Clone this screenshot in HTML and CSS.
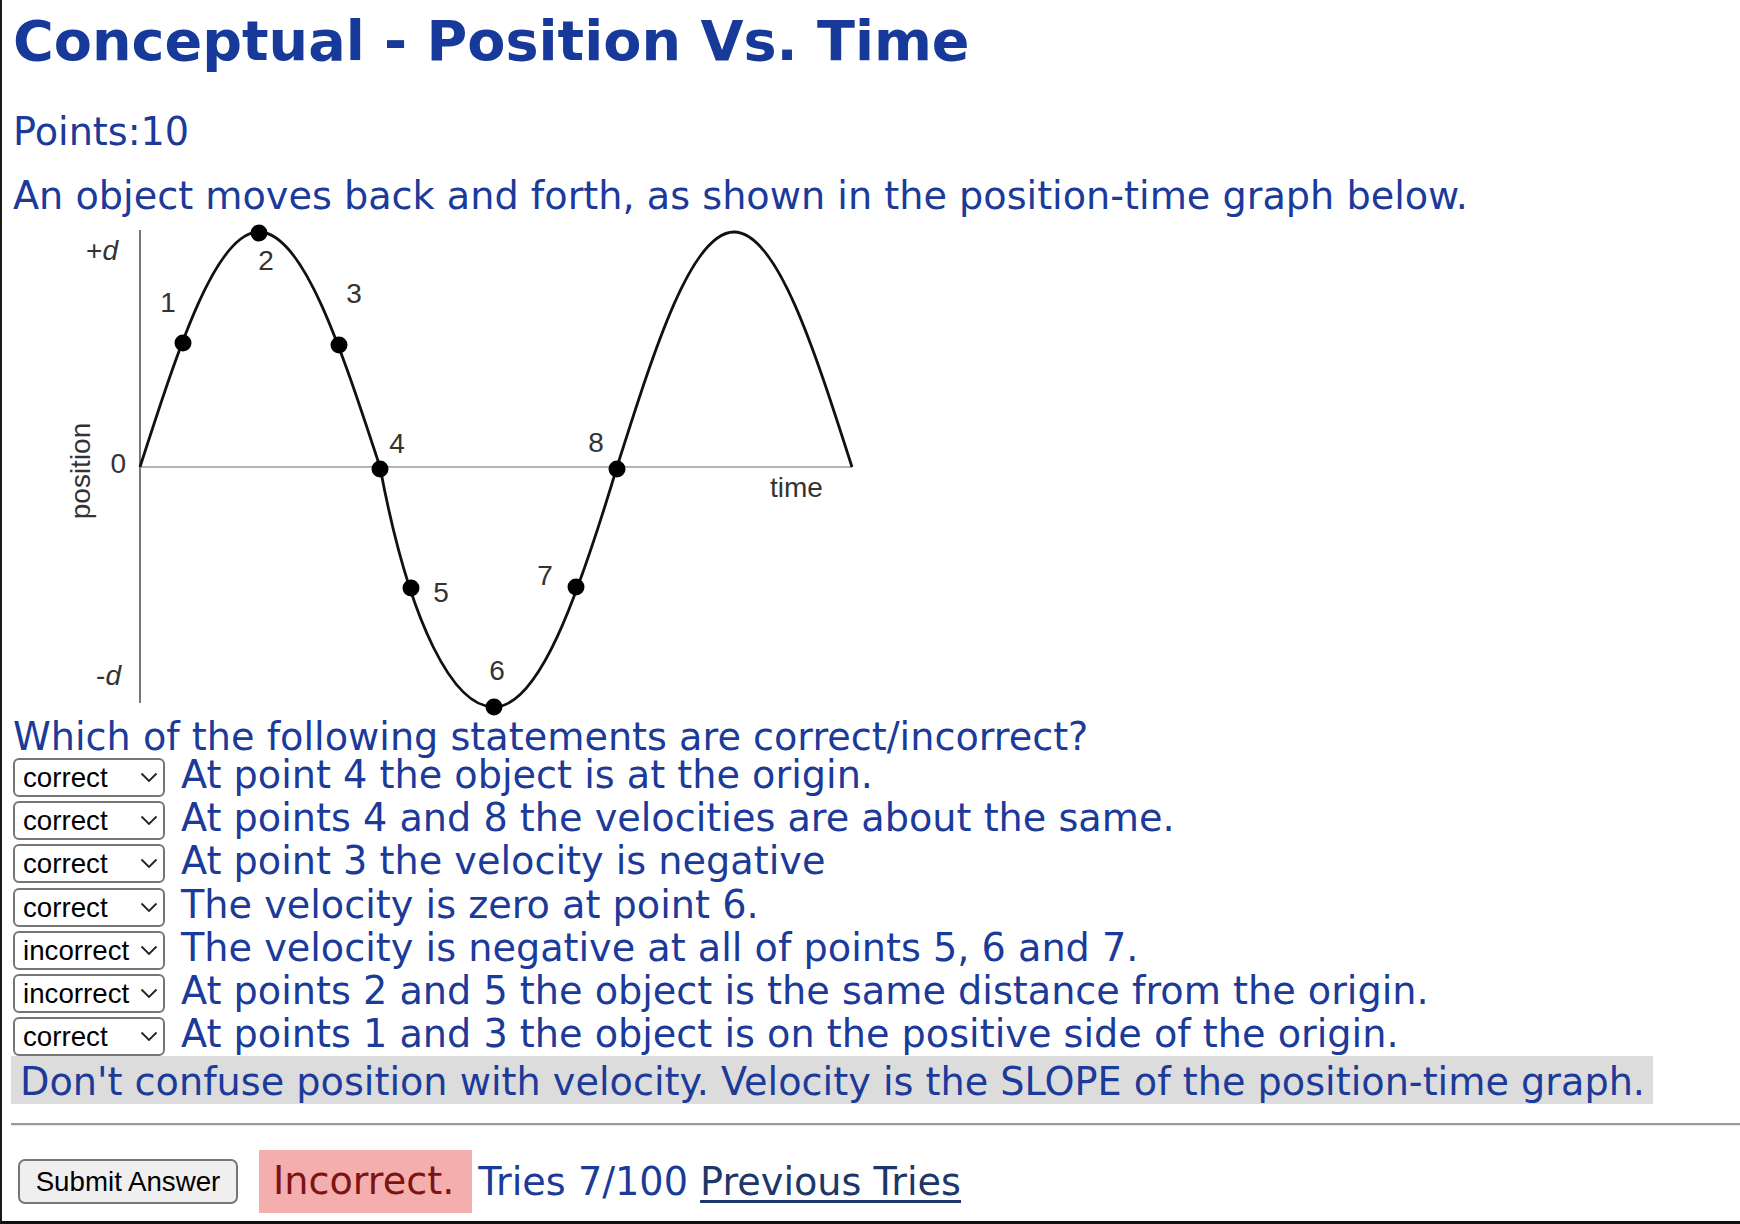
FILE: index.html
```html
<!DOCTYPE html>
<html lang="en">
<head>
    <meta charset="UTF-8">
    <title>Conceptual - Position Vs. Time</title>
    <link rel="stylesheet" href="styles.css">
</head>
<body>
<div class="page">

    <h1 class="title">Conceptual - Position Vs. Time</h1>

    <p class="points">Points:10</p>

    <p class="intro">An object moves back and forth, as shown in the position-time graph below.</p>

    <svg class="graph" width="860" height="496" viewBox="13 220 860 496">
        <line x1="140" y1="230" x2="140" y2="703" stroke="#555" stroke-width="1.6"/>
        <line x1="140" y1="467" x2="852" y2="467" stroke="#b4b4b4" stroke-width="2"/>
        <path d="M140 467 C178.8 346.7 215.9 232 259 232 C302.8 232 340.6 346.7 380 467 C410 627 454 707 494 707 C538.5 707 577 600 617 467 C655.1 346.7 691.6 232 734 232 C776.7 232 813.5 346.7 852 467"
              fill="none" stroke="#111" stroke-width="2.8"/>
        <g fill="#000">
            <circle cx="183" cy="343" r="8.5"/>
            <circle cx="259" cy="233" r="8.5"/>
            <circle cx="339" cy="345" r="8.5"/>
            <circle cx="380" cy="469" r="8.5"/>
            <circle cx="411" cy="588" r="8.5"/>
            <circle cx="494" cy="707" r="8.5"/>
            <circle cx="576" cy="587" r="8.5"/>
            <circle cx="617" cy="469" r="8.5"/>
        </g>
        <g class="graph-num" text-anchor="middle">
            <text x="168" y="312">1</text>
            <text x="266" y="270">2</text>
            <text x="354" y="303">3</text>
            <text x="397" y="453">4</text>
            <text x="441" y="602">5</text>
            <text x="497" y="680">6</text>
            <text x="545" y="585">7</text>
            <text x="596" y="452">8</text>
        </g>
        <g class="graph-num" text-anchor="end">
            <text x="118" y="260">+<tspan font-style="italic">d</tspan></text>
            <text x="126" y="473">0</text>
            <text x="121" y="685">-<tspan font-style="italic">d</tspan></text>
        </g>
        <text class="graph-num" x="770" y="497">time</text>
        <text class="graph-num" x="90" y="471" text-anchor="middle" transform="rotate(-90 90 471)">position</text>
    </svg>

    <p class="question">Which of the following statements are correct/incorrect?</p>

    <div class="statements">
        <div class="statement">
            <span class="pick"><select><option selected>correct</option><option>incorrect</option></select><svg class="chev" width="18" height="11" viewBox="0 0 18 11"><path d="M1.5 1.5 L9 9 L16.5 1.5"/></svg></span>
            <span class="statement-text">At point 4 the object is at the origin.</span>
        </div>
        <div class="statement">
            <span class="pick"><select><option selected>correct</option><option>incorrect</option></select><svg class="chev" width="18" height="11" viewBox="0 0 18 11"><path d="M1.5 1.5 L9 9 L16.5 1.5"/></svg></span>
            <span class="statement-text">At points 4 and 8 the velocities are about the same.</span>
        </div>
        <div class="statement">
            <span class="pick"><select><option selected>correct</option><option>incorrect</option></select><svg class="chev" width="18" height="11" viewBox="0 0 18 11"><path d="M1.5 1.5 L9 9 L16.5 1.5"/></svg></span>
            <span class="statement-text">At point 3 the velocity is negative</span>
        </div>
        <div class="statement">
            <span class="pick"><select><option selected>correct</option><option>incorrect</option></select><svg class="chev" width="18" height="11" viewBox="0 0 18 11"><path d="M1.5 1.5 L9 9 L16.5 1.5"/></svg></span>
            <span class="statement-text">The velocity is zero at point 6.</span>
        </div>
        <div class="statement">
            <span class="pick"><select><option>correct</option><option selected>incorrect</option></select><svg class="chev" width="18" height="11" viewBox="0 0 18 11"><path d="M1.5 1.5 L9 9 L16.5 1.5"/></svg></span>
            <span class="statement-text">The velocity is negative at all of points 5, 6 and 7.</span>
        </div>
        <div class="statement">
            <span class="pick"><select><option>correct</option><option selected>incorrect</option></select><svg class="chev" width="18" height="11" viewBox="0 0 18 11"><path d="M1.5 1.5 L9 9 L16.5 1.5"/></svg></span>
            <span class="statement-text">At points 2 and 5 the object is the same distance from the origin.</span>
        </div>
        <div class="statement">
            <span class="pick"><select><option selected>correct</option><option>incorrect</option></select><svg class="chev" width="18" height="11" viewBox="0 0 18 11"><path d="M1.5 1.5 L9 9 L16.5 1.5"/></svg></span>
            <span class="statement-text">At points 1 and 3 the object is on the positive side of the origin.</span>
        </div>
    </div>

    <div class="hint">Don't confuse position with velocity. Velocity is the SLOPE of the position-time graph.</div>

    <hr class="rule">

    <div class="answer-bar">
        <button class="submit">Submit Answer</button>
        <span class="verdict">Incorrect.</span>
        <span class="tries">Tries 7/100 <a href="#">Previous Tries</a></span>
    </div>

</div>
</body>
</html>
```

FILE: styles.css
```css
html, body { margin: 0; padding: 0; background: #fff; }
body { font-family: "DejaVu Sans", Verdana, sans-serif; color: #1b3a99; }

.page { box-sizing: border-box; height: 1224px; padding: 9px 0 0 11px; border-left: 2px solid #1a1a1a; border-bottom: 3px solid #111; overflow: hidden; }

.title { margin: 0; font-size: 55.6px; line-height: 64px; font-weight: bold; color: #17399a; }
.points { margin: 37px 0 0; font-size: 38.2px; line-height: 44px; }
.intro { margin: 20px 0 0; font-size: 38.2px; line-height: 44px; }

.graph { display: block; margin-top: 2px; }
.graph-num { font-family: "Liberation Sans", Arial, sans-serif; font-size: 28px; fill: #333; }

.question { margin: 0; padding-top: 1px; font-size: 38.2px; line-height: 41px; }

.statements { display: flex; flex-direction: column; gap: 4.2px; }
.statement { display: flex; align-items: flex-start; height: 39px; }
.statement-text { font-size: 38.2px; line-height: 34px; white-space: nowrap; }

.pick { position: relative; display: block; flex: none; width: 152px; height: 39px; margin-right: 16px; }
.pick select { appearance: none; -webkit-appearance: none; box-sizing: border-box; width: 152px; height: 39px; margin: 0; padding: 0 0 0 8px; border: 2px solid #767676; border-radius: 6px; background: #fff; color: #000; font-family: "Liberation Sans", Arial, sans-serif; font-size: 27.7px; }
.chev { position: absolute; right: 7px; top: 14px; pointer-events: none; }
.chev path { fill: none; stroke: #222; stroke-width: 1.8; }

.hint { display: inline-block; margin-left: -2px; padding: 6px 8px 2px 9px; background: #dcdcdc; font-size: 38.2px; line-height: 40px; white-space: nowrap; }

.rule { height: 0; margin: 19px 0 0 -2px; border: 0; border-top: 2px solid #9a9a9a; border-bottom: 1px solid #e6e6e6; }

.answer-bar { display: flex; align-items: center; margin-top: 24px; }
.submit { box-sizing: border-box; width: 220px; height: 45px; margin-left: 5px; padding: 0; border: 2px solid #767676; border-radius: 7px; background: #efefef; color: #000; font-family: "Liberation Sans", Arial, sans-serif; font-size: 27.7px; }
.verdict { height: 63px; margin-left: 21px; padding: 0 18px 0 14px; background: #f4aeae; color: #7d1414; font-size: 38.2px; line-height: 63px; }
.tries { margin-left: 6px; font-size: 38.2px; line-height: 44px; white-space: nowrap; }
.tries a { color: #1c3768; text-decoration: underline; text-decoration-thickness: 3px; text-underline-offset: 5px; }
```
